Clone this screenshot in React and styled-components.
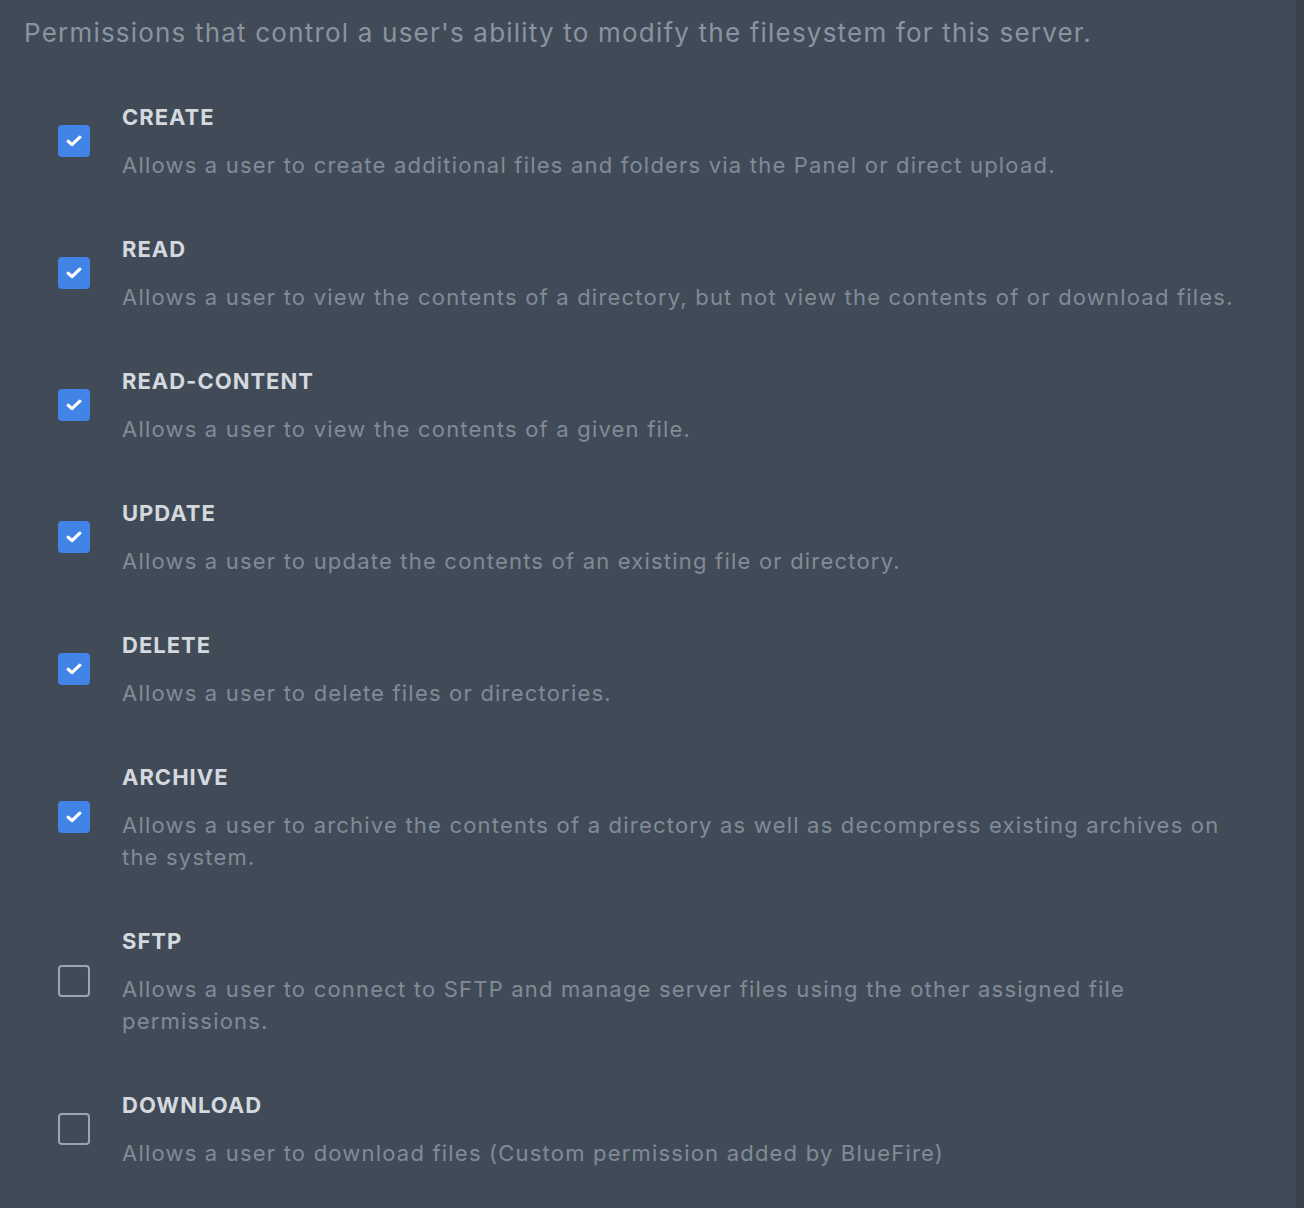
import React from 'react';
import styled, { createGlobalStyle } from 'styled-components';

const permissions = [
  { key: 'CREATE', checked: true, text: 'Allows a user to create additional files and folders via the Panel or direct upload.' },
  { key: 'READ', checked: true, text: 'Allows a user to view the contents of a directory, but not view the contents of or download files.' },
  { key: 'READ-CONTENT', checked: true, text: 'Allows a user to view the contents of a given file.' },
  { key: 'UPDATE', checked: true, text: 'Allows a user to update the contents of an existing file or directory.' },
  { key: 'DELETE', checked: true, text: 'Allows a user to delete files or directories.' },
  { key: 'ARCHIVE', checked: true, text: 'Allows a user to archive the contents of a directory as well as decompress existing archives on the system.' },
  { key: 'SFTP', checked: false, text: 'Allows a user to connect to SFTP and manage server files using the other assigned file permissions.' },
  { key: 'DOWNLOAD', checked: false, text: 'Allows a user to download files (Custom permission added by BlueFire)' },
];

export default function App() {
  return (
    <>
      <GlobalStyle />
      <Page>
        <Panel>
          <Intro>Permissions that control a user's ability to modify the filesystem for this server.</Intro>
          <List>
            {permissions.map((p) => (
              <Row key={p.key}>
                <Box checked={p.checked}>
                  {p.checked && (
                    <svg width="16" height="12" viewBox="0 0 16 12" fill="none">
                      <path d="M2.2 6.2 L6 9.6 L13.8 2.2" stroke="#fff" strokeWidth="3.2" strokeLinecap="round" strokeLinejoin="round" />
                    </svg>
                  )}
                </Box>
                <Body>
                  <Title>{p.key}</Title>
                  <Desc>{p.text}</Desc>
                </Body>
              </Row>
            ))}
          </List>
        </Panel>
        <Edge />
      </Page>
    </>
  );
}

const GlobalStyle = createGlobalStyle`
  html, body {
    margin: 0;
    padding: 0;
    background: #414b57;
  }
  body {
    font-family: Inter, "Open Sans", sans-serif;
    -webkit-font-smoothing: antialiased;
  }
`;

const Page = styled.div`
  display: flex;
  min-height: 1208px;
  background: #414b57;
`;

const Panel = styled.div`
  flex: 1;
  padding: 17px 24px 0;
`;

const Edge = styled.div`
  width: 8px;
  background: #3a434d;
`;

const Intro = styled.p`
  margin: 0;
  font-size: 26px;
  line-height: 32px;
  letter-spacing: 1.2px;
  color: #8a94a0;
`;

const List = styled.div`
  margin-top: 26px;
  padding-left: 34px;
`;

const Row = styled.div`
  display: flex;
  align-items: center;
  gap: 32px;
  padding: 26px 0;
`;

const Box = styled.div`
  flex: none;
  width: 32px;
  height: 32px;
  box-sizing: border-box;
  border-radius: 4px;
  display: flex;
  align-items: center;
  justify-content: center;
  background: ${(p) => (p.checked ? '#4283e6' : 'transparent')};
  border: ${(p) => (p.checked ? 'none' : '2px solid #9aa5b1')};
`;

const Body = styled.div`
  flex: 1;
  padding-right: 24px;
`;

const Title = styled.div`
  font-size: 22px;
  line-height: 32px;
  font-weight: 700;
  letter-spacing: 1px;
  color: #d4d9df;
`;

const Desc = styled.div`
  margin-top: 16px;
  font-size: 22px;
  line-height: 32px;
  letter-spacing: 1.2px;
  color: #808b97;
`;
